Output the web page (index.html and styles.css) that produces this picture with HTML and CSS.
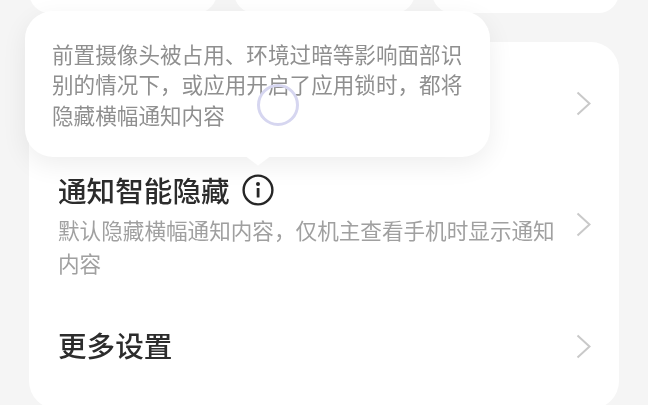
FILE: index.html
```html
<!DOCTYPE html>
<html lang="zh-CN">
<head>
  <meta charset="UTF-8" />
  <title>通知设置</title>
  <link rel="stylesheet" href="styles.css">
</head>
<body>

<div class="screen">
  <!-- top cards, mostly scrolled away -->
  <div class="top-cards">
    <div class="top-card"></div>
    <div class="top-card"></div>
    <div class="top-card"></div>
  </div>

  <div class="settings">
    <div class="row row-first">
      <div class="row-text"></div>
      <svg class="chevron" viewBox="0 0 15 25"><path d="M1.5 1.5 L13.5 12.5 L1.5 23.5"/></svg>
    </div>

    <div class="row row-smart">
      <div class="row-text">
        <div class="title-line">
          <span class="row-title">通知智能隐藏</span>
          <svg class="info-icon" viewBox="0 0 32 32">
            <circle class="info-ring" cx="16" cy="16" r="14.4"/>
            <circle class="info-mark" cx="16" cy="10" r="2"/>
            <rect class="info-mark" x="14.7" y="14" width="2.8" height="9.5" rx="0.6"/>
          </svg>
        </div>
        <p class="row-sub">默认隐藏横幅通知内容，仅机主查看手机时显示通知内容</p>
      </div>
      <svg class="chevron" viewBox="0 0 15 25"><path d="M1.5 1.5 L13.5 12.5 L1.5 23.5"/></svg>
    </div>

    <div class="row row-more">
      <div class="row-text">
        <span class="row-title">更多设置</span>
      </div>
      <svg class="chevron" viewBox="0 0 15 25"><path d="M1.5 1.5 L13.5 12.5 L1.5 23.5"/></svg>
    </div>
  </div>

  <!-- tooltip over the list -->
  <div class="tooltip">
    前置摄像头被占用、环境过暗等影响面部识别的情况下，或应用开启了应用锁时，都将隐藏横幅通知内容
  </div>

  <!-- touch indicator from the screen recording -->
  <div class="touch-ring"></div>
</div>

</body>
</html>
```

FILE: styles.css
```css
html, body {
  margin: 0;
  padding: 0;
}

body {
  font-family: "Noto Sans CJK SC", "Noto Sans", sans-serif;
  background-color: #f5f5f5;
}

.screen {
  position: relative;
  width: 648px;
  height: 405px;
  overflow: hidden;
  padding: 0 29px;
  box-sizing: border-box;
}

.top-cards {
  display: grid;
  grid-template-columns: 187.5px 181.5px 187px;
  gap: 17px;
  height: 41px;
  margin-top: -28px;
  margin-bottom: 29px;
}

.top-card {
  background: #fff;
  border-radius: 22px;
}

.settings {
  display: flex;
  flex-direction: column;
  background: #fff;
  border-radius: 28px;
  height: 367px;
  padding: 0 28px 0 29px;
  box-sizing: border-box;
}

.row {
  display: flex;
  align-items: center;
}

.row-first {
  height: 123px;
}

.row-smart {
  padding-top: 7px;
}

.row-more {
  padding-top: 48px;
}

.row-text {
  flex: 1;
  padding-right: 14px;
  filter: blur(0.4px);
}

.title-line {
  display: flex;
  align-items: center;
  gap: 12px;
}

.row-title {
  display: block;
  font-size: 28.6px;
  line-height: 36px;
  font-weight: 500;
  color: #2c2c2c;
}

.row-sub {
  margin: 5px 0 0;
  font-size: 21.6px;
  line-height: 33px;
  color: #a0a0a0;
}

.info-icon {
  width: 32px;
  height: 32px;
  flex: none;
}

.info-ring {
  fill: none;
  stroke: #262626;
  stroke-width: 2.4;
}

.info-mark {
  fill: #262626;
}

.chevron {
  width: 15px;
  height: 25px;
  flex: none;
}

.chevron path {
  fill: none;
  stroke: #c9c9c9;
  stroke-width: 2;
}

.row-smart .chevron {
  margin-top: -2px;
}

.row-more .chevron {
  margin-top: 2px;
}

.tooltip {
  position: absolute;
  left: 25px;
  top: 11px;
  width: 465px;
  box-sizing: border-box;
  padding: 27.5px 24px 26.5px 27px;
  background: #fff;
  border-radius: 28px;
  box-shadow: 0 8px 26px rgba(0,0,0,0.07);
  font-size: 21.6px;
  line-height: 30.5px;
  color: #8f8f8f;
  filter: blur(0.4px);
}

.tooltip::after {
  content: "";
  position: absolute;
  left: 221px;
  top: 100%;
  width: 24px;
  height: 9px;
  background: #fff;
  clip-path: polygon(0 0, 100% 0, 50% 100%);
}

.touch-ring {
  position: absolute;
  left: 257px;
  top: 84px;
  width: 42px;
  height: 42px;
  box-sizing: border-box;
  border: 3px solid #d6d6f0;
  border-radius: 50%;
  filter: blur(0.7px);
}
```
